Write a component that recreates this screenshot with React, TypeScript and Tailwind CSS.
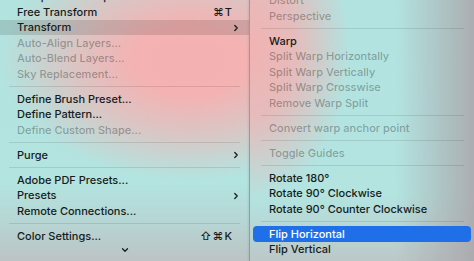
import { ChevronRight, ChevronDown } from 'lucide-react';

type Item =
  | { kind: 'sep' }
  | { kind: 'item'; label: string; disabled?: boolean; sub?: boolean; shortcut?: string; active?: 'gray' | 'blue' };

const leftItems: Item[] = [
  { kind: 'item', label: 'Perspective Warp' },
  { kind: 'item', label: 'Free Transform', shortcut: '⌘T' },
  { kind: 'item', label: 'Transform', sub: true, active: 'gray' },
  { kind: 'item', label: 'Auto-Align Layers...', disabled: true },
  { kind: 'item', label: 'Auto-Blend Layers...', disabled: true },
  { kind: 'item', label: 'Sky Replacement...', disabled: true },
  { kind: 'sep' },
  { kind: 'item', label: 'Define Brush Preset...' },
  { kind: 'item', label: 'Define Pattern...' },
  { kind: 'item', label: 'Define Custom Shape...', disabled: true },
  { kind: 'sep' },
  { kind: 'item', label: 'Purge', sub: true },
  { kind: 'sep' },
  { kind: 'item', label: 'Adobe PDF Presets...' },
  { kind: 'item', label: 'Presets', sub: true },
  { kind: 'item', label: 'Remote Connections...' },
  { kind: 'sep' },
  { kind: 'item', label: 'Color Settings...', shortcut: '⇧⌘K' },
];

const rightItems: Item[] = [
  { kind: 'item', label: 'Distort', disabled: true },
  { kind: 'item', label: 'Perspective', disabled: true },
  { kind: 'sep' },
  { kind: 'item', label: 'Warp' },
  { kind: 'item', label: 'Split Warp Horizontally', disabled: true },
  { kind: 'item', label: 'Split Warp Vertically', disabled: true },
  { kind: 'item', label: 'Split Warp Crosswise', disabled: true },
  { kind: 'item', label: 'Remove Warp Split', disabled: true },
  { kind: 'sep' },
  { kind: 'item', label: 'Convert warp anchor point', disabled: true },
  { kind: 'sep' },
  { kind: 'item', label: 'Toggle Guides', disabled: true },
  { kind: 'sep' },
  { kind: 'item', label: 'Rotate 180°' },
  { kind: 'item', label: 'Rotate 90° Clockwise' },
  { kind: 'item', label: 'Rotate 90° Counter Clockwise' },
  { kind: 'sep' },
  { kind: 'item', label: 'Flip Horizontal', active: 'blue' },
  { kind: 'item', label: 'Flip Vertical' },
];

function MenuRow({ item, side }: { item: Item; side: 'left' | 'right' }) {
  if (item.kind === 'sep') {
    return (
      <div className={side === 'left' ? 'h-[9.5px] flex items-center pl-[9px] pr-[9px]' : 'h-[9.5px] flex items-center pl-[11px] pr-[10px]'}>
        <div className="h-px w-full bg-black/10" />
      </div>
    );
  }

  let rowCls = 'h-[15.5px] flex items-center';
  if (item.active === 'gray') rowCls += ' bg-black/[0.12]';
  if (item.active === 'blue') rowCls += ' bg-[#1f6fe8] rounded-[4px] mx-[3px]';

  let textCls = 'text-[#161c1c]';
  if (item.disabled) textCls = 'text-black/30';
  if (item.active === 'blue') textCls = 'text-white';

  let pad = side === 'left' ? 'pl-[17px] ' : 'pl-[19px] ';
  if (item.active === 'blue') pad = 'pl-[16px] ';

  return (
    <div className={rowCls}>
      <span className={pad + textCls + ' flex-1 whitespace-nowrap'}>{item.label}</span>
      {item.shortcut && (
        <span className="pr-[16px] text-[#161c1c] tracking-[1px]">{item.shortcut}</span>
      )}
      {item.sub && <ChevronRight className="mr-[8px] h-[10px] w-[10px] text-[#161c1c]" strokeWidth={3} />}
    </div>
  );
}

export default function App() {
  return (
    <div className="w-[474px] h-[261px] overflow-hidden flex text-[11px] font-medium leading-none font-['Inter','Liberation_Sans',sans-serif]">
      <div className="w-[249px] h-full flex flex-col bg-[radial-gradient(ellipse_190px_120px_at_190px_60px,#f4b1b1_0%,#f4b2b2_30%,rgba(244,178,178,0.6)_62%,rgba(244,178,178,0)_100%),linear-gradient(to_bottom,#b2e3df_0%,#b3e4e0_70%,#b6d6d4_85%,#bcc3c5_100%)]">
        <div className="-mt-[11.25px]">
          {leftItems.map((it, i) => (
            <MenuRow key={i} item={it} side="left" />
          ))}
        </div>
        <div className="h-[12px] flex justify-center pt-[1px]">
          <ChevronDown className="h-[10px] w-[10px] text-[#161c1c]" strokeWidth={3} />
        </div>
      </div>
      <div className="flex-1 h-full border-l border-black/10 shadow-[-1px_0_2px_rgba(0,0,0,0.08)] bg-[radial-gradient(ellipse_100px_150px_at_0px_50px,#f2b2b2_0%,rgba(242,178,178,0.8)_45%,rgba(242,180,180,0)_100%),linear-gradient(to_right,rgba(0,0,0,0)_0%,rgba(0,0,0,0)_65%,rgba(170,168,172,0.9)_100%),linear-gradient(to_bottom,#b2e3e0_0%,#b3e4e0_75%,#bcc8c8_100%)]">
        <div className="-mt-[7.25px]">
          {rightItems.map((it, i) => (
            <MenuRow key={i} item={it} side="right" />
          ))}
        </div>
      </div>
    </div>
  );
}
